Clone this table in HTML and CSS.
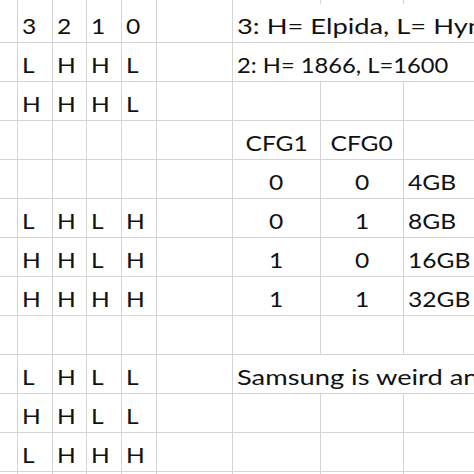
FILE: index.html
```html
<!DOCTYPE html>
<html lang="en">
<head>
<meta charset="utf-8">
<title>Sheet</title>
<link rel="stylesheet" href="styles.css">
</head>
<body>
<div class="sheet">
  <!-- row 0 (partial) -->
  <div class="c"></div><div class="c"></div><div class="c"></div><div class="c"></div><div class="c"></div><div class="c"></div><div class="c"></div><div class="c"></div><div class="c"></div>
  <!-- row 1 -->
  <div class="c"></div><div class="c"><span class="t">3</span></div><div class="c"><span class="t">2</span></div><div class="c"><span class="t">1</span></div><div class="c"><span class="t">0</span></div><div class="c"></div><div class="c span"><span class="t wide">3: H= Elpida, L= Hynix</span></div>
  <!-- row 2 -->
  <div class="c"></div><div class="c"><span class="t">L</span></div><div class="c"><span class="t">H</span></div><div class="c"><span class="t">H</span></div><div class="c"><span class="t">L</span></div><div class="c"></div><div class="c span"><span class="t narrow">2: H= 1866, L=1600</span></div>
  <!-- row 3 -->
  <div class="c"></div><div class="c"><span class="t">H</span></div><div class="c"><span class="t">H</span></div><div class="c"><span class="t">H</span></div><div class="c"><span class="t">L</span></div><div class="c"></div><div class="c"></div><div class="c"></div><div class="c"></div>
  <!-- row 4 -->
  <div class="c"></div><div class="c"></div><div class="c"></div><div class="c"></div><div class="c"></div><div class="c"></div><div class="c mid"><span class="t">CFG1</span></div><div class="c mid"><span class="t">CFG0</span></div><div class="c"></div>
  <!-- row 5 -->
  <div class="c"></div><div class="c"></div><div class="c"></div><div class="c"></div><div class="c"></div><div class="c"></div><div class="c mid"><span class="t">0</span></div><div class="c mid"><span class="t">0</span></div><div class="c"><span class="t">4GB</span></div>
  <!-- row 6 -->
  <div class="c"></div><div class="c"><span class="t">L</span></div><div class="c"><span class="t">H</span></div><div class="c"><span class="t">L</span></div><div class="c"><span class="t">H</span></div><div class="c"></div><div class="c mid"><span class="t">0</span></div><div class="c mid"><span class="t">1</span></div><div class="c"><span class="t">8GB</span></div>
  <!-- row 7 -->
  <div class="c"></div><div class="c"><span class="t">H</span></div><div class="c"><span class="t">H</span></div><div class="c"><span class="t">L</span></div><div class="c"><span class="t">H</span></div><div class="c"></div><div class="c mid"><span class="t">1</span></div><div class="c mid"><span class="t">0</span></div><div class="c"><span class="t">16GB</span></div>
  <!-- row 8 -->
  <div class="c"></div><div class="c"><span class="t">H</span></div><div class="c"><span class="t">H</span></div><div class="c"><span class="t">H</span></div><div class="c"><span class="t">H</span></div><div class="c"></div><div class="c mid"><span class="t">1</span></div><div class="c mid"><span class="t">1</span></div><div class="c"><span class="t">32GB</span></div>
  <!-- row 9 -->
  <div class="c"></div><div class="c"></div><div class="c"></div><div class="c"></div><div class="c"></div><div class="c"></div><div class="c"></div><div class="c"></div><div class="c"></div>
  <!-- row 10 -->
  <div class="c"></div><div class="c"><span class="t">L</span></div><div class="c"><span class="t">H</span></div><div class="c"><span class="t">L</span></div><div class="c"><span class="t">L</span></div><div class="c"></div><div class="c span"><span class="t wide">Samsung is weird and confusing</span></div>
  <!-- row 11 -->
  <div class="c"></div><div class="c"><span class="t">H</span></div><div class="c"><span class="t">H</span></div><div class="c"><span class="t">L</span></div><div class="c"><span class="t">L</span></div><div class="c"></div><div class="c"></div><div class="c"></div><div class="c"></div>
  <!-- row 12 -->
  <div class="c"></div><div class="c"><span class="t">L</span></div><div class="c"><span class="t">H</span></div><div class="c"><span class="t">H</span></div><div class="c"><span class="t">H</span></div><div class="c"></div><div class="c"></div><div class="c"></div><div class="c"></div>
  <!-- row 13 (partial) -->
  <div class="c"></div><div class="c"></div><div class="c"></div><div class="c"></div><div class="c"></div><div class="c"></div><div class="c"></div><div class="c"></div><div class="c"></div>
</div>
</body>
</html>
```

FILE: styles.css
```css
html, body {
  margin: 0;
  padding: 0;
  overflow: hidden;
  background: #ffffff;
}

.sheet {
  display: grid;
  grid-template-columns: 17px 34px 33px 34px 34px 75px 87px 82px 150px;
  grid-template-rows: 3px repeat(13, 38px);
  gap: 1px;
  background: #d4d4d4;
  width: max-content;
  font-family: "Lato", "Open Sans", sans-serif;
  font-size: 21px;
  color: #111;
}

.c {
  background: #fff;
  display: flex;
  align-items: flex-end;
  padding: 0 0 4px 4px;
  line-height: 24px;
  white-space: nowrap;
  overflow: hidden;
  min-width: 0;
}

.c.mid {
  justify-content: center;
  padding-left: 0;
}

.c.span {
  grid-column: 7 / -1;
}

.t {
  display: inline-block;
  transform: scaleX(1.17);
  transform-origin: left center;
}

.t.wide {
  transform: scaleX(1.3);
}

.t.narrow {
  transform: scaleX(1.13);
}

.mid .t {
  transform-origin: center center;
}
```
